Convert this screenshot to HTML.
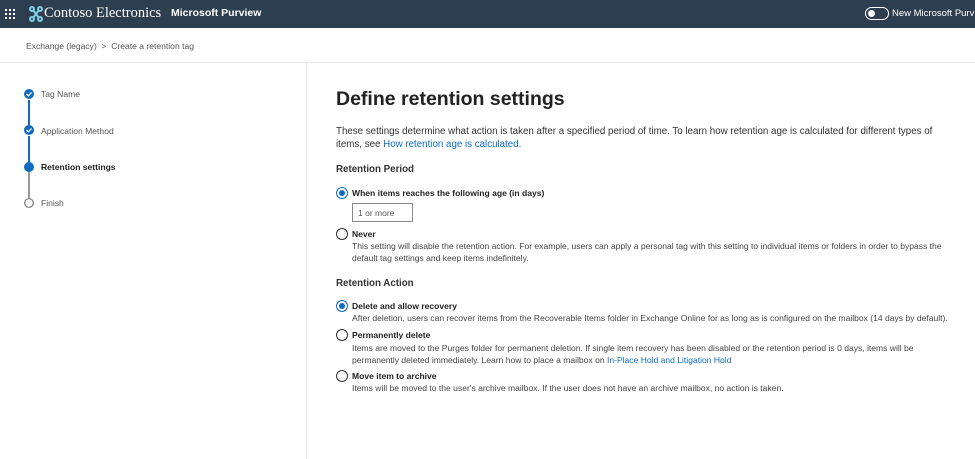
<!DOCTYPE html>
<html><head><meta charset="utf-8"><style>
*{margin:0;padding:0;box-sizing:border-box}
body{width:975px;height:459px;overflow:hidden;background:#fff;font-family:"Liberation Sans","DejaVu Sans",sans-serif;color:#323130;position:relative}
.hdr{position:absolute;left:0;top:0;width:975px;height:28px;background:#2c3e50;color:#fff}
.abs{position:absolute;white-space:nowrap}
.t{font-size:9.75px}
.s{font-size:8.55px;color:#444}
.b{font-weight:bold}
a{color:#0f6cbd;text-decoration:none}
.radio{position:absolute;width:12px;height:12px;border:1px solid #333;border-radius:50%;background:#fff}
.radio.on{border-color:#0f6cbd}
.radio.on::after{content:"";position:absolute;left:2px;top:2px;width:6px;height:6px;border-radius:50%;background:#0f6cbd}
</style></head><body>
<div class="hdr">
<svg class="abs" style="left:5px;top:9px" width="10" height="10"><g fill="#fff"><rect x="0" y="0" width="2" height="2"/><rect x="4" y="0" width="2" height="2"/><rect x="8" y="0" width="2" height="2"/><rect x="0" y="4" width="2" height="2"/><rect x="4" y="4" width="2" height="2"/><rect x="8" y="4" width="2" height="2"/><rect x="0" y="8" width="2" height="2"/><rect x="4" y="8" width="2" height="2"/><rect x="8" y="8" width="2" height="2"/></g></svg>
<svg class="abs" style="left:29px;top:6px" width="14" height="16" viewBox="0 0 14 16"><g stroke="#7fd0e6" stroke-width="2" fill="none"><circle cx="3" cy="3" r="2"/><circle cx="11" cy="3" r="2"/><circle cx="3" cy="13" r="2"/><circle cx="11" cy="13" r="2"/><path d="M4 4L10 12M10 4L4 12"/></g></svg>
<div class="abs" style="left:44px;top:5px;font-family:'Liberation Serif',serif;font-size:14.5px">Contoso Electronics</div>
<div class="abs b" style="left:171px;top:7px;font-size:10.5px">Microsoft Purview</div>
<div class="abs" style="left:865px;top:7px;width:24px;height:13px;border:1px solid #fff;border-radius:7px"><div style="position:absolute;left:2px;top:2px;width:7px;height:7px;border-radius:50%;background:#fff"></div></div>
<div class="abs" style="left:892px;top:8px;font-size:9.5px">New Microsoft Purview</div>
</div>
<div class="abs s" style="left:26px;top:41px;color:#555">Exchange (legacy) &nbsp;&gt;&nbsp; Create a retention tag</div>
<div class="abs" style="left:0;top:62px;width:975px;height:1px;background:#e8e8e8"></div>
<div class="abs" style="left:306px;top:63px;width:1px;height:396px;background:#e8e8e8"></div>
<div class="abs" style="left:28px;top:100px;width:2px;height:26px;background:#0f6cbd"></div>
<div class="abs" style="left:28px;top:136px;width:2px;height:26px;background:#0f6cbd"></div>
<div class="abs" style="left:28px;top:172px;width:2px;height:26px;background:#999"></div>
<svg class="abs" style="left:24px;top:89px" width="10" height="10"><circle cx="5" cy="5" r="5" fill="#0f6cbd"/><path d="M2.5 5L4.3 6.8 7.5 3.5" stroke="#fff" stroke-width="1.3" fill="none"/></svg>
<svg class="abs" style="left:24px;top:125px" width="10" height="10"><circle cx="5" cy="5" r="5" fill="#0f6cbd"/><path d="M2.5 5L4.3 6.8 7.5 3.5" stroke="#fff" stroke-width="1.3" fill="none"/></svg>
<svg class="abs" style="left:24px;top:162px" width="10" height="10"><circle cx="5" cy="5" r="5" fill="#0f6cbd"/></svg>
<svg class="abs" style="left:24px;top:198px" width="10" height="10"><circle cx="5" cy="5" r="4.3" fill="none" stroke="#777" stroke-width="1.2"/></svg>
<div class="abs s" style="left:41px;top:89px;color:#555">Tag Name</div>
<div class="abs s" style="left:41px;top:126px;color:#555">Application Method</div>
<div class="abs s b" style="left:41px;top:162px;color:#222">Retention settings</div>
<div class="abs s" style="left:41px;top:198px;color:#555">Finish</div>
<div class="abs b" style="left:336px;top:88px;font-size:19.5px;color:#222">Define retention settings</div>
<div class="abs t" style="left:336px;top:125px;line-height:13px">These settings determine what action is taken after a specified period of time. To learn how retention age is calculated for different types of<br>items, see <a>How retention age is calculated.</a></div>
<div class="abs t b" style="left:336px;top:164px;color:#333">Retention Period</div>
<div class="radio on" style="left:336px;top:187px"></div>
<div class="abs s b" style="left:352px;top:188px;color:#222">When items reaches the following age (in days)</div>
<div class="abs" style="left:352px;top:203px;width:61px;height:19px;border:1px solid #888;font-size:8.5px;color:#555;padding:4px 5px">1 or more</div>
<div class="radio" style="left:336px;top:228px"></div>
<div class="abs s b" style="left:352px;top:229px;color:#222">Never</div>
<div class="abs s" style="left:352px;top:240px;line-height:12px">This setting will disable the retention action. For example, users can apply a personal tag with this setting to individual items or folders in order to bypass the<br>default tag settings and keep items indefinitely.</div>
<div class="abs t b" style="left:336px;top:278px;color:#333">Retention Action</div>
<div class="radio on" style="left:336px;top:300px"></div>
<div class="abs s b" style="left:352px;top:301px;color:#222">Delete and allow recovery</div>
<div class="abs s" style="left:352px;top:313px">After deletion, users can recover items from the Recoverable Items folder in Exchange Online for as long as is configured on the mailbox (14 days by default).</div>
<div class="radio" style="left:336px;top:329px"></div>
<div class="abs s b" style="left:352px;top:330px;color:#222">Permanently delete</div>
<div class="abs s" style="left:352px;top:342px;line-height:12px">Items are moved to the Purges folder for permanent deletion. If single item recovery has been disabled or the retention period is 0 days, items will be<br>permanently deleted immediately. Learn how to place a mailbox on <a>In-Place Hold and Litigation Hold</a></div>
<div class="radio" style="left:336px;top:370px"></div>
<div class="abs s b" style="left:352px;top:371px;color:#222">Move item to archive</div>
<div class="abs s" style="left:352px;top:383px">Items will be moved to the user's archive mailbox. If the user does not have an archive mailbox, no action is taken.</div>
</body></html>
